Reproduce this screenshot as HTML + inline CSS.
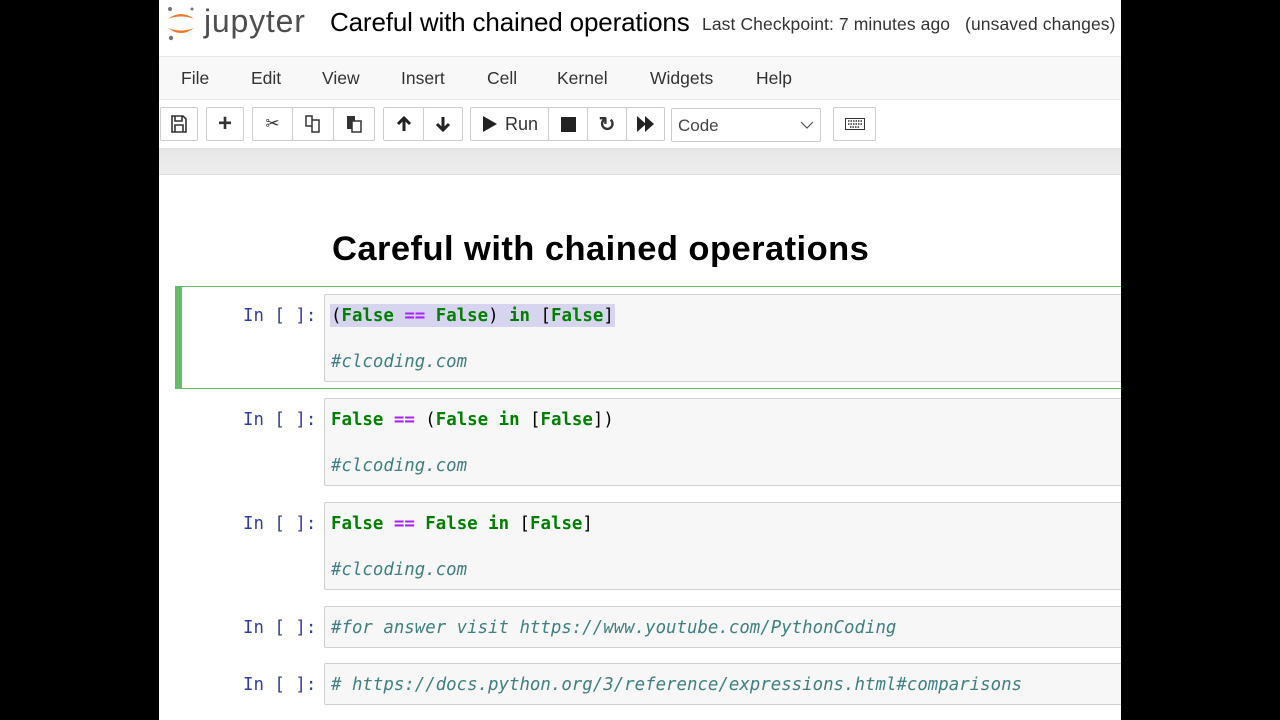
<!DOCTYPE html>
<html><head><meta charset="utf-8"><style>
*{margin:0;padding:0;box-sizing:border-box}
body{width:1280px;height:720px;background:#000;position:relative;overflow:hidden;font-family:"Liberation Sans",sans-serif}
.pg{position:absolute;left:159px;top:0;width:962px;height:720px;background:#fff;overflow:hidden}
.a{position:absolute;white-space:nowrap}
.menu{position:absolute;left:0;top:56px;width:962px;height:44px;background:#f8f8f8;border-top:1px solid #e7e7e7;border-bottom:1px solid #e7e7e7}
.menu span{position:absolute;top:11px;font-size:17.5px;color:#333}
.btn{position:absolute;top:107px;height:34px;border:1px solid #ccc;border-radius:2px;background:#fff;display:flex;align-items:center;justify-content:center;color:#333;font-size:17px}
.band{position:absolute;left:0;top:148px;width:962px;height:27px;background:linear-gradient(#e6e6e6,#eee);border-bottom:1px solid #ddd}
.mono{font-family:"DejaVu Sans Mono","Liberation Mono",monospace;font-size:17.4px}
.inp{position:absolute;left:165px;width:800px;background:#f7f7f7;border:1px solid #cfcfcf;border-radius:2px}
.pr{position:absolute;left:84px;color:#303f9f}
.k{color:#008000;font-weight:bold}.o{color:#aa22ff;font-weight:bold}.c{color:#408080;font-style:italic}
</style></head><body><div class="pg">
<svg class="a" style="left:7px;top:5px" width="32" height="36" viewBox="0 0 32 36"><circle cx="4" cy="4" r="2" fill="#767677"/><circle cx="26" cy="4" r="1.5" fill="#767677"/><circle cx="5" cy="33" r="2.2" fill="#767677"/><path d="M2 14 Q15 4 28 14 Q15 9 2 14Z" fill="#f37726"/><path d="M2 23 Q15 33 28 23 Q15 28 2 23Z" fill="#f37726"/></svg>
<div class="a" style="left:45px;top:3px;font-size:32px;color:#4e4e4e;letter-spacing:0.8px">jupyter</div>
<div class="a" style="left:171px;top:7px;font-size:26px;color:#000;letter-spacing:-0.15px">Careful with chained operations</div>
<div class="a" style="left:543px;top:14px;font-size:17.5px;color:#333;letter-spacing:0.1px">Last Checkpoint: 7 minutes ago &nbsp; (unsaved changes)</div>
<div class="menu"><span style="left:22px">File</span><span style="left:92px">Edit</span><span style="left:163px">View</span><span style="left:242px">Insert</span><span style="left:328px">Cell</span><span style="left:398px">Kernel</span><span style="left:491px">Widgets</span><span style="left:597px">Help</span></div>
<div class="btn" style="left:1px;width:38px"><svg width="16" height="18" viewBox="0 0 16 18"><path d="M1 1h11l3 3v13H1Z M4 1v5h7V1 M4 10h8v7H4Z" fill="none" stroke="#333" stroke-width="1.6"/></svg></div>
<div class="btn" style="left:47px;width:38px;font-weight:bold;font-size:24px">+</div>
<div class="btn" style="left:93px;width:41px">✂</div>
<div class="btn" style="left:133px;width:42px"><svg width="18" height="18" viewBox="0 0 18 18"><path d="M2 1h6v10H2Z M8 5h7v12H8Z" fill="none" stroke="#333" stroke-width="1.5"/></svg></div>
<div class="btn" style="left:174px;width:42px"><svg width="18" height="18" viewBox="0 0 18 18"><path d="M2 1h8v13H2Z" fill="#333"/><path d="M7 6h9v11H7Z" fill="#fff" stroke="#333" stroke-width="1.5"/></svg></div>
<div class="btn" style="left:224px;width:41px"><svg width="16" height="16" viewBox="0 0 16 16"><path d="M8 15V3M2 8l6-6 6 6" fill="none" stroke="#222" stroke-width="3"/></svg></div>
<div class="btn" style="left:264px;width:40px"><svg width="16" height="16" viewBox="0 0 16 16"><path d="M8 1v12M2 8l6 6 6-6" fill="none" stroke="#222" stroke-width="3"/></svg></div>
<div class="btn" style="left:311px;width:79px;justify-content:flex-start;padding-left:12px;font-size:18px"><svg width="14" height="16"><path d="M0 0L14 8L0 16Z" fill="#222"/></svg><span style="margin-left:8px">Run</span></div>
<div class="btn" style="left:389px;width:40px"><div style="width:15px;height:15px;background:#222"></div></div>
<div class="btn" style="left:428px;width:40px;font-weight:bold;font-size:20px">↻</div>
<div class="btn" style="left:467px;width:39px"><svg width="18" height="16"><path d="M0 0L9 8L0 16Z M8 0L17 8L8 16Z" fill="#222"/></svg></div>
<div class="btn" style="left:512px;width:150px;justify-content:space-between;padding:0 6px;top:108px"><span style="color:#444;margin-top:2px">Code</span><svg width="14" height="8"><path d="M1 1l6 6 6-6" fill="none" stroke="#555" stroke-width="1.2"/></svg></div>
<div class="btn" style="left:674px;width:43px"><svg width="20" height="12"><rect x="0.5" y="0.5" width="19" height="11" fill="none" stroke="#333"/><path d="M3 3h14M3 6h14M5 9h10" stroke="#333" stroke-width="1.5" stroke-dasharray="1.5 1"/></svg></div>
<div class="band"></div>
<div class="a" style="left:173px;top:230px;font-size:34.5px;font-weight:bold;color:#000;letter-spacing:0.45px">Careful with chained operations</div>
<div class="a" style="left:16px;top:286px;width:950px;height:103px;border:1px solid #66bb6a;border-left:7px solid #66bb6a"></div>
<div class="inp" style="top:294px;height:88px"></div>
<div class="inp" style="top:398px;height:88px"></div>
<div class="inp" style="top:502px;height:88px"></div>
<div class="inp" style="top:606px;height:42px"></div>
<div class="inp" style="top:663px;height:42px"></div>
<div class="a" style="left:171px;top:304px;width:285px;height:23px;background:#d7d4f0"></div>
<div class="a mono pr" style="top:306px">In [ ]:</div>
<div class="a mono pr" style="top:410px">In [ ]:</div>
<div class="a mono pr" style="top:514px">In [ ]:</div>
<div class="a mono pr" style="top:618px">In [ ]:</div>
<div class="a mono pr" style="top:675px">In [ ]:</div>
<div class="a mono" style="left:172px;top:306px">(<span class="k">False</span> <span class="o">==</span> <span class="k">False</span>) <span class="k">in</span> [<span class="k">False</span>]</div>
<div class="a mono c" style="left:172px;top:352px">#clcoding.com</div>
<div class="a mono" style="left:172px;top:410px"><span class="k">False</span> <span class="o">==</span> (<span class="k">False</span> <span class="k">in</span> [<span class="k">False</span>])</div>
<div class="a mono c" style="left:172px;top:456px">#clcoding.com</div>
<div class="a mono" style="left:172px;top:514px"><span class="k">False</span> <span class="o">==</span> <span class="k">False</span> <span class="k">in</span> [<span class="k">False</span>]</div>
<div class="a mono c" style="left:172px;top:560px">#clcoding.com</div>
<div class="a mono c" style="left:172px;top:618px">#for answer visit https://www.youtube.com/PythonCoding</div>
<div class="a mono c" style="left:172px;top:675px"># https://docs.python.org/3/reference/expressions.html#comparisons</div>
</div></body></html>
